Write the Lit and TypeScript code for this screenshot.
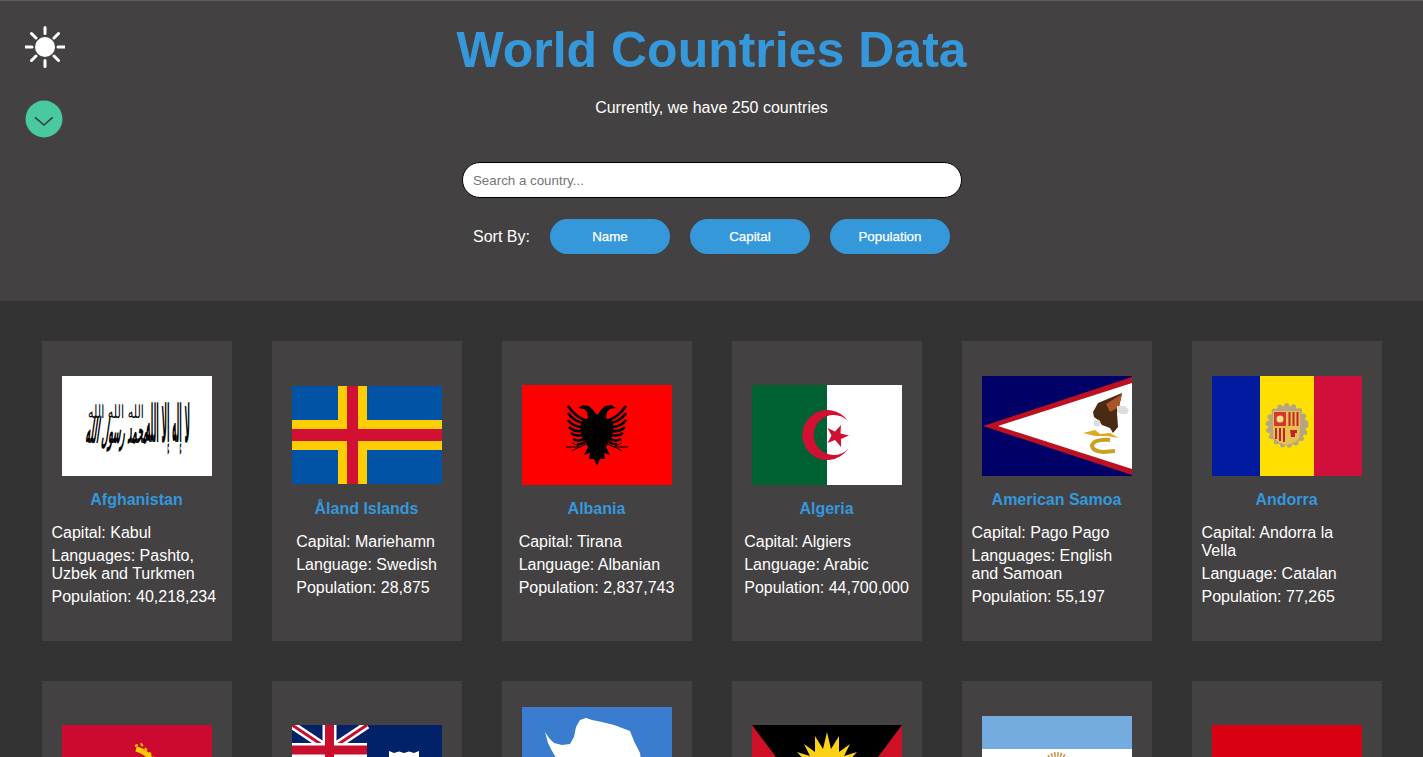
import { LitElement, html, css, svg } from "lit";
import { customElement } from "lit/decorators.js";

const eagleHalf = svg`<path d="M75 30L79 25L83 21L89 20L94 23L88 24L85 27L84 33L90 36L92 42L90 52L86 58L84 62L88 70L82 68L83 74L78 74L75 81Z" fill="#000"/><path d="M84 36Q96 33 104 21M88 38Q98 37 104 28M90 42Q99 42 104 35M90 46Q98 47 103 42M90 50Q96 52 101 48M88 54Q94 57 99 54M87 57Q91 60 95 59" stroke="#000" stroke-width="2.600" fill="none"/><path d="M83 58L92 62L106 62M93 62L100 66M93 61L100 58" stroke="#000" stroke-width="1" fill="none"/>`;

const flags: Record<string, unknown> = {
  af: svg`<rect width="150" height="100" fill="#fff"/><g font-family="'DejaVu Sans',sans-serif" fill="#000" text-anchor="middle" direction="rtl" opacity=".99" text-rendering="geometricPrecision"><text transform="translate(106 66) scale(1 2.900)" font-size="18" font-weight="700" textLength="44" lengthAdjust="spacingAndGlyphs">لا إله إلا الله</text><text transform="translate(54 67) skewX(-8) scale(1 1.800)" font-size="20" font-weight="700" textLength="62" lengthAdjust="spacingAndGlyphs">محمد رسول الله</text><text transform="translate(54 42) scale(1 1.800)" font-size="10" textLength="56" lengthAdjust="spacingAndGlyphs">الله الله الله</text></g>`,
  ax: svg`<rect y="1" width="150" height="98" fill="#0053a5"/><path d="M46 1h29v98H46z M0 35h150v30H0z" fill="#ffce00"/><path d="M55 1h11v98H55z M0 44h150v12H0z" fill="#d21034"/>`,
  al: svg`<rect width="150" height="100" fill="#f00"/>${eagleHalf}<g transform="translate(150 0) scale(-1 1)">${eagleHalf}</g>`,
  dz: svg`<rect width="75" height="100" fill="#006233"/><rect x="75" width="75" height="100" fill="#fff"/><path d="M96 36A25 25 0 1 0 96 64A20 20 0 1 1 96 36Z" fill="#d21034"/><path d="M75.500 43L83 46.500L89 40L88.500 48.500L97 50.500L89 54L89 62L83 55L75.500 58L79.500 50.500Z" fill="#d21034"/>`,
  as: svg`<rect width="150" height="100" fill="#006"/><path d="M150 1V99L1 50Z" fill="#bd1021"/><path d="M150 7V93L16 50Z" fill="#fff"/><path d="M111 36L116 27L128 22L140 17L137 31L135 37L136 51L131 57L128 52L120 49L116 44L112 41Z" fill="#4a2a12"/><path d="M124 28L140 18L137 31L128 36Z" fill="#a8552a"/><path d="M135 30L143 30L147 34L145 38L139 38L135 36Z" fill="#ddd"/><circle cx="115" cy="47" r="3.500" fill="#ddd"/><path d="M101 57L113 54L118 58L128 57L137 62L125 60L113 60Z" fill="#e0a820"/><path d="M128 64Q112 63 110 69Q110 75 121 76L133 75" fill="none" stroke="#c9a020" stroke-width="4"/>`,
  ad: svg`<rect width="48" height="100" fill="#001aa0"/><rect x="48" width="54" height="100" fill="#fedf00"/><rect x="102" width="48" height="100" fill="#d0103a"/><ellipse cx="75" cy="49.500" rx="19" ry="20" fill="#b5a582" stroke="#b5a582" stroke-width="5" stroke-linecap="round" stroke-dasharray="0 7"/><path d="M61 35H88V58Q88 66 75 69Q61 66 61 58Z" fill="#e8c050"/><rect x="62" y="36" width="12" height="14" fill="#d9352a"/><circle cx="68" cy="43" r="3.500" fill="#f6e08c"/><path d="M76.500 36h2v14h-2zM80.500 36h2v14h-2zM84.500 36h2v14h-2zM63 52h2v11h-2zM67 52h2v13h-2zM71 52h2v14h-2z" fill="#c8202a"/><path d="M78 54h7v3h-2v4h-4z" fill="#c8202a"/>`,
  ao: svg`<rect width="150" height="50" fill="#cc092f"/><rect y="50" width="150" height="50" fill="#000"/><path d="M74 24Q88 27 92 42Q92 58 78 68" fill="none" stroke="#ffcb00" stroke-width="5"/><path d="M73 21L79 19L93 34L97 44" fill="none" stroke="#ffcb00" stroke-width="2" stroke-dasharray="3 3"/><path d="M60 60L88 78L85 80L58 64Z" fill="#ffcb00"/>`,
  ai: svg`<rect width="150" height="100" fill="#012169"/><path d="M0 0L75 50M75 0L0 50" stroke="#fff" stroke-width="8"/><path d="M0 0L75 50M75 0L0 50" stroke="#c8102e" stroke-width="3"/><path d="M37.500 0V50M0 25H75" stroke="#fff" stroke-width="14"/><path d="M37.500 0V50M0 25H75" stroke="#c8102e" stroke-width="9"/><path d="M97 26L102 28L107 26.500L112 28L117 26.500L122 28L127 26V60Q127 72 112 78Q97 72 97 60Z" fill="#fff"/><path d="M97 60Q97 72 112 78Q127 72 127 60Z" fill="#9cf"/><path d="M104 33H120L116 50H108Z" fill="#f90"/>`,
  aq: svg`<rect width="150" height="100" fill="#3a7dce"/><path d="M23 25L27 31L32 36L40 38L48 37L52 30L54 20L58 13L64 11L70 13L80 15L92 18L108 24L112 34L118 46L120 62L110 78L90 88L70 86L55 80L48 66L36 54L30 44L26 36Z" fill="#fff"/>`,
  ag: svg`<rect width="150" height="100" fill="#ce1126"/><path d="M0 0H150L75 100Z" fill="#000"/><path d="M30 40H120L75 100Z" fill="#0072c6"/><path d="M40 53.400H110L75 100Z" fill="#fff"/><path d="M75 7L79 24L87 11L87 27L98 19L92 31L105 27L95 38L108 40H42L55 38L45 27L58 31L52 19L63 27L63 11L71 24Z" fill="#fcd116"/>`,
  ar: svg`<rect width="150" height="100" fill="#fff"/><rect width="150" height="33" fill="#74acdf"/><rect y="67" width="150" height="33" fill="#74acdf"/><circle cx="75" cy="50" r="11.500" fill="none" stroke="#c9954a" stroke-width="5" stroke-dasharray="1.500 1.500"/><circle cx="75" cy="50" r="8" fill="#f6b40e" stroke="#85340a" stroke-width=".6"/>`,
  am: svg`<rect width="150" height="33.400" fill="#d90012"/><rect y="33.400" width="150" height="33.300" fill="#0033a0"/><rect y="66.700" width="150" height="33.300" fill="#f2a800"/>`,
};

type Country = { name: string; flag: string; capital: string; lang: string; pop: string };

const countries: Country[] = [
  { name: "Afghanistan", flag: "af", capital: "Kabul", lang: "Languages: Pashto, Uzbek and Turkmen", pop: "40,218,234" },
  { name: "Åland Islands", flag: "ax", capital: "Mariehamn", lang: "Language: Swedish", pop: "28,875" },
  { name: "Albania", flag: "al", capital: "Tirana", lang: "Language: Albanian", pop: "2,837,743" },
  { name: "Algeria", flag: "dz", capital: "Algiers", lang: "Language: Arabic", pop: "44,700,000" },
  { name: "American Samoa", flag: "as", capital: "Pago Pago", lang: "Languages: English and Samoan", pop: "55,197" },
  { name: "Andorra", flag: "ad", capital: "Andorra la Vella", lang: "Language: Catalan", pop: "77,265" },
  { name: "Angola", flag: "ao", capital: "Luanda", lang: "Language: Portuguese", pop: "32,866,268" },
  { name: "Anguilla", flag: "ai", capital: "The Valley", lang: "Language: English", pop: "15,857" },
  { name: "Antarctica", flag: "aq", capital: "None", lang: "Languages: English, Russian, Spanish and French", pop: "1,000" },
  { name: "Antigua and Barbuda", flag: "ag", capital: "Saint John's", lang: "Language: English", pop: "97,928" },
  { name: "Argentina", flag: "ar", capital: "Buenos Aires", lang: "Languages: Guaraní and Spanish", pop: "45,376,763" },
  { name: "Armenia", flag: "am", capital: "Yerevan", lang: "Language: Armenian", pop: "2,963,234" },
];

@customElement("app-root")
export class AppRoot extends LitElement {
  static styles = css`
    :host {
      display: block;
      background: #333333;
      color: #fff;
      font-family: "Liberation Sans", Arial, sans-serif;
      font-size: 16px;
    }
    header {
      height: 301px;
      box-sizing: border-box;
      background: #444142;
      border-top: 1px solid #5e5c5d;
      display: grid;
      grid-template-columns: 1fr auto 1fr;
    }
    .toggles {
      display: flex;
      flex-direction: column;
      align-items: flex-start;
      padding: 25px 0 0 25px;
      gap: 32px;
    }
    .toggles svg {
      display: block;
    }
    .mid {
      display: flex;
      flex-direction: column;
      align-items: center;
    }
    h1 {
      margin: 21px 0 0;
      font-size: 50px;
      line-height: 56px;
      font-weight: 700;
      color: #3498db;
    }
    .count {
      margin: 21px 0 0;
      line-height: 18px;
    }
    input {
      display: block;
      margin: 45px 0 0 1px;
      width: 500px;
      height: 36px;
      box-sizing: border-box;
      border: 1px solid #000;
      border-radius: 18px;
      background: #fff;
      padding: 0 10px;
      font: 13.333px "Liberation Sans", Arial, sans-serif;
      outline: none;
    }
    input::placeholder {
      color: #757575;
    }
    .sort {
      display: flex;
      align-items: center;
      gap: 20px;
      margin-top: 21px;
    }
    .sort button {
      width: 120px;
      height: 35px;
      border: 0;
      border-radius: 20px;
      background: #3498db;
      color: #fff;
      font: 13.333px "Liberation Sans", Arial, sans-serif;
      -webkit-text-stroke: 0.25px #fff;
      padding: 0;
    }
    main {
      display: flex;
      flex-wrap: wrap;
      justify-content: center;
      padding-top: 20px;
    }
    .card {
      width: 190px;
      height: 300px;
      margin: 20px;
      box-sizing: border-box;
      padding: 10px;
      background: #444142;
      display: flex;
      flex-direction: column;
      align-items: center;
      justify-content: center;
    }
    .card svg {
      display: block;
      width: 150px;
      height: 100px;
      margin-left: 1px;
      flex: none;
    }
    h3 {
      margin: 15px 0;
      font-size: 16px;
      line-height: 18px;
      font-weight: 700;
      color: #3498db;
      text-align: center;
    }
    .info p {
      margin: 0 0 5px;
      line-height: 18px;
    }
    .info p:last-child {
      margin: 0;
    }
  `;

  render() {
    return html`
      <header>
        <div class="toggles">
          <svg width="40" height="42" viewBox="0 0 40 42" aria-label="theme">
            <circle cx="20" cy="21" r="10" fill="#fff" />
            <path
              d="M20 1.500V7.500M20 34.500V40.500M0.500 21H7M33 21H39.500M6.500 7.500L11 12M29 30L33.500 34.500M33.500 7.500L29 12M11 30L6.500 34.500"
              stroke="#fff"
              stroke-width="3"
              stroke-linecap="round"
              fill="none"
            />
          </svg>
          <svg width="38" height="38" viewBox="0 0 38 38" aria-label="down">
            <circle cx="19" cy="19" r="18.500" fill="#48c9a0" />
            <path d="M10 17.300L19 25L27.700 17.300" stroke="#3d3d3d" stroke-width="1.600" fill="none" />
          </svg>
        </div>
        <div class="mid">
          <h1>World Countries Data</h1>
          <p class="count">Currently, we have 250 countries</p>
          <input placeholder="Search a country..." />
          <div class="sort">
            <span>Sort By:</span>
            <button>Name</button>
            <button>Capital</button>
            <button>Population</button>
          </div>
        </div>
        <div></div>
      </header>
      <main>
        ${countries.map(
          (c) => html`
            <article class="card">
              <svg viewBox="0 0 150 100" role="img" aria-label="${c.name} flag">${flags[c.flag]}</svg>
              <h3>${c.name}</h3>
              <div class="info">
                <p>Capital: ${c.capital}</p>
                <p>${c.lang}</p>
                <p>Population: ${c.pop}</p>
              </div>
            </article>
          `
        )}
      </main>
    `;
  }
}
